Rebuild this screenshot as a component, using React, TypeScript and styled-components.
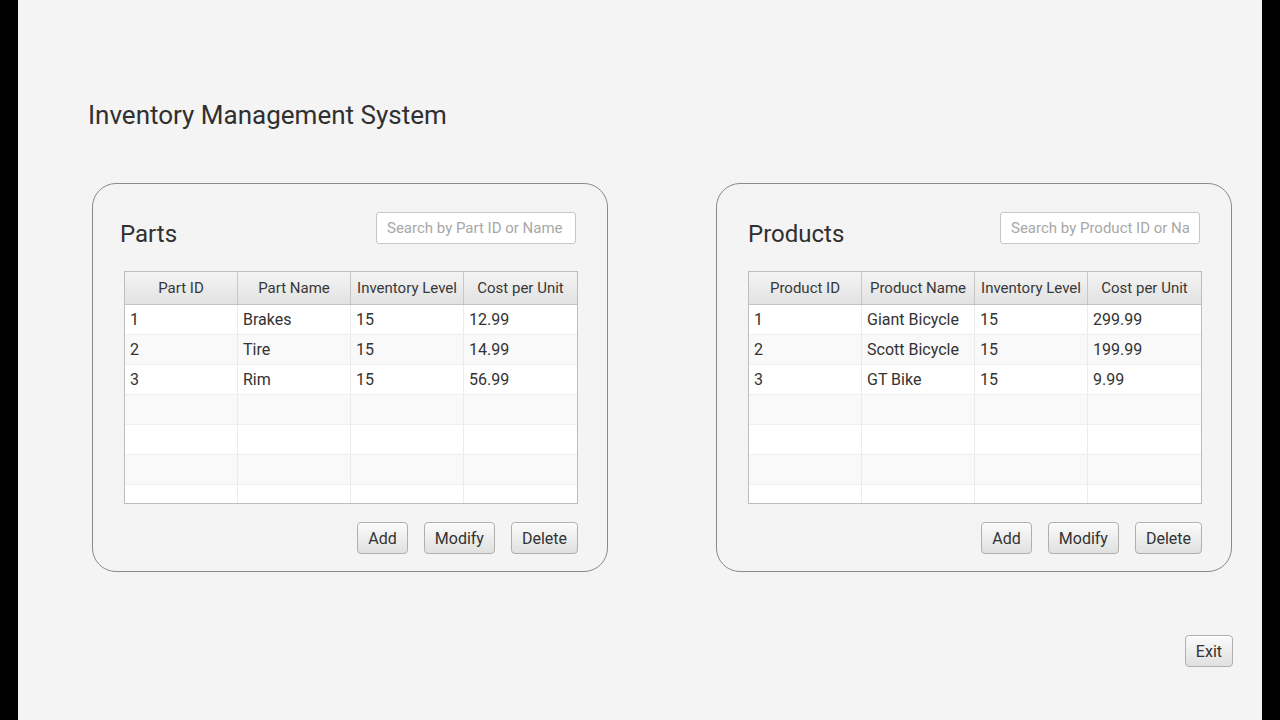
import React from 'react';
import styled, { createGlobalStyle } from 'styled-components';

const GlobalStyle = createGlobalStyle`
  html, body {
    margin: 0;
    padding: 0;
    background: #000;
  }
  * {
    box-sizing: border-box;
  }
`;

const Frame = styled.div`
  width: 1280px;
  height: 720px;
  display: flex;
  justify-content: center;
  background: #000;
`;

const Stage = styled.div`
  width: 1244px;
  height: 720px;
  background: #f4f4f4;
  display: flex;
  flex-direction: column;
  padding-top: 98px;
  font-family: Roboto, 'Noto Sans', sans-serif;
  color: #333;
`;

const AppTitle = styled.h1`
  margin: 0 0 51px 70px;
  font-size: 26px;
  line-height: 34px;
  font-weight: 400;
  color: #303030;
`;

const PanelRow = styled.div`
  display: flex;
  gap: 108px;
  padding-left: 74px;
`;

const Panel = styled.section`
  width: 516px;
  height: 389px;
  border: 1px solid #8a8a8a;
  border-radius: 24px;
  padding: 28px 29px 0 31px;
  display: flex;
  flex-direction: column;
`;

const PanelHeader = styled.div`
  height: 59px;
  display: flex;
  justify-content: space-between;
  align-items: flex-start;
`;

const PanelTitle = styled.h2<{ $inset: number }>`
  margin: 7px 0 0 ${(p) => p.$inset - 32}px;
  font-size: 24px;
  line-height: 30px;
  font-weight: 400;
  color: #303030;
`;

const Search = styled.input`
  width: 200px;
  height: 32px;
  margin: 0 2px 0 0;
  padding: 0 10px;
  border: 1px solid #c6c6c6;
  border-radius: 3px;
  background: #fff;
  font-family: inherit;
  font-size: 15px;
  color: #333;
  outline: none;
  &::placeholder {
    color: #a8a8a8;
  }
`;

const Table = styled.div`
  width: 454px;
  height: 233px;
  border: 1px solid #bdbdbd;
  background: #fff;
  overflow: hidden;
`;

const HeaderRow = styled.div`
  display: grid;
  grid-template-columns: repeat(4, 1fr);
  height: 33px;
  background: linear-gradient(#f4f4f4, #e2e2e2);
  border-bottom: 1px solid #c3c3c3;
`;

const HeaderCell = styled.div`
  display: flex;
  align-items: center;
  justify-content: center;
  font-size: 15px;
  color: #383838;
  white-space: nowrap;
  border-right: 1px solid #c8c8c8;
  &:last-child {
    border-right: none;
  }
`;

const Row = styled.div<{ $odd: boolean }>`
  display: grid;
  grid-template-columns: repeat(4, 1fr);
  height: 30px;
  background: ${(p) => (p.$odd ? '#f9f9f9' : '#fff')};
  border-bottom: 1px solid #efefef;
`;

const Cell = styled.div`
  display: flex;
  align-items: center;
  padding: 0 0 1px 5px;
  font-size: 16px;
  color: #333;
  white-space: nowrap;
  border-right: 1px solid #ebebeb;
  &:last-child {
    border-right: none;
  }
`;

const ActionBar = styled.div`
  display: flex;
  justify-content: flex-end;
  gap: 16px;
  margin-top: 18px;
`;

const Button = styled.button`
  height: 32px;
  padding: 0 10px;
  border: 1px solid #b0b0b0;
  border-radius: 4px;
  background: linear-gradient(#fbfbfb, #e0e0e0);
  box-shadow: inset 0 1px 0 #fff;
  font-family: inherit;
  font-size: 16px;
  color: #333;
  cursor: pointer;
`;

const Footer = styled.div`
  display: flex;
  justify-content: flex-end;
  padding-right: 29px;
  margin-top: 63px;
`;

type Item = [string, string, string, string];

const parts: Item[] = [
  ['1', 'Brakes', '15', '12.99'],
  ['2', 'Tire', '15', '14.99'],
  ['3', 'Rim', '15', '56.99'],
];

const products: Item[] = [
  ['1', 'Giant Bicycle', '15', '299.99'],
  ['2', 'Scott Bicycle', '15', '199.99'],
  ['3', 'GT Bike', '15', '9.99'],
];

const ROWS = 7;

function DataPanel(props: {
  title: string;
  inset: number;
  placeholder: string;
  columns: string[];
  items: Item[];
}) {
  const rows: (Item | null)[] = Array.from({ length: ROWS }, (_, i) => props.items[i] ?? null);
  return (
    <Panel>
      <PanelHeader>
        <PanelTitle $inset={props.inset}>{props.title}</PanelTitle>
        <Search placeholder={props.placeholder} />
      </PanelHeader>
      <Table>
        <HeaderRow>
          {props.columns.map((c) => (
            <HeaderCell key={c}>{c}</HeaderCell>
          ))}
        </HeaderRow>
        {rows.map((r, i) => (
          <Row key={i} $odd={i % 2 === 1}>
            {[0, 1, 2, 3].map((j) => (
              <Cell key={j}>{r ? r[j] : ''}</Cell>
            ))}
          </Row>
        ))}
      </Table>
      <ActionBar>
        <Button>Add</Button>
        <Button>Modify</Button>
        <Button>Delete</Button>
      </ActionBar>
    </Panel>
  );
}

export default function App() {
  return (
    <>
      <GlobalStyle />
      <Frame>
        <Stage>
          <AppTitle>Inventory Management System</AppTitle>
          <PanelRow>
            <DataPanel
              title="Parts"
              inset={28}
              placeholder="Search by Part ID or Name"
              columns={['Part ID', 'Part Name', 'Inventory Level', 'Cost per Unit']}
              items={parts}
            />
            <DataPanel
              title="Products"
              inset={32}
              placeholder="Search by Product ID or Name"
              columns={['Product ID', 'Product Name', 'Inventory Level', 'Cost per Unit']}
              items={products}
            />
          </PanelRow>
          <Footer>
            <Button>Exit</Button>
          </Footer>
        </Stage>
      </Frame>
    </>
  );
}
